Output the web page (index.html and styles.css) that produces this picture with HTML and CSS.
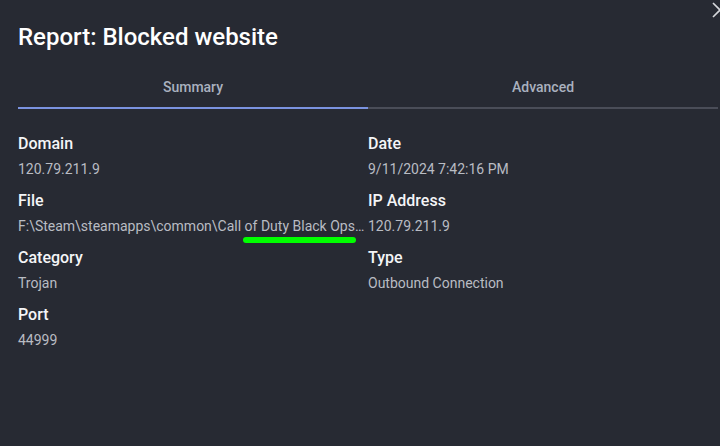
FILE: index.html
```html
<!DOCTYPE html>
<html>
<head>
<meta charset="utf-8">
<link rel="stylesheet" href="styles.css">
</head>
<body>
<div class="dialog">
  <svg class="close" width="16" height="16" viewBox="0 0 16 16"><path d="M1 1 L15 15 M15 1 L1 15" stroke="#d6d8dc" stroke-width="1.6" fill="none"/></svg>
  <h1 class="title">Report: Blocked website</h1>
  <div class="tabs">
    <div class="tab active">Summary</div>
    <div class="tab">Advanced</div>
  </div>
  <div class="grid">
    <div class="field"><div class="label">Domain</div><div class="value">120.79.211.9</div></div>
    <div class="field"><div class="label">Date</div><div class="value">9/11/2024 7:42:16 PM</div></div>
    <div class="field"><div class="label">File</div><div class="value trunc">F:\Steam\steamapps\common\Call of Duty Black Ops III\BlackOps3.exe</div></div>
    <div class="field"><div class="label">IP Address</div><div class="value">120.79.211.9</div></div>
    <div class="field"><div class="label">Category</div><div class="value">Trojan</div></div>
    <div class="field"><div class="label">Type</div><div class="value">Outbound Connection</div></div>
    <div class="field"><div class="label">Port</div><div class="value">44999</div></div>
  </div>
  <div class="highlight"></div>
</div>
</body>
</html>
```
FILE: styles.css
```css
* { box-sizing: border-box; }
html, body {
  margin: 0;
  padding: 0;
  width: 720px;
  height: 446px;
  overflow: hidden;
  background: #272a33;
  font-family: Roboto, "Liberation Sans", sans-serif;
}
.dialog {
  position: relative;
  width: 720px;
  height: 446px;
  padding: 21px 2px 0 18px;
}
.close {
  position: absolute;
  left: 712px;
  top: 2px;
}
.title {
  margin: 0;
  font-size: 24px;
  line-height: 32px;
  font-weight: 500;
  color: #ffffff;
}
.tabs {
  display: flex;
  margin-top: 24px;
}
.tab {
  flex: 0 0 350px;
  text-align: center;
  font-size: 14px;
  line-height: 20px;
  font-weight: 500;
  color: #aab1bf;
  padding-bottom: 10px;
  border-bottom: 2px solid #4a4d58;
}
.tab.active {
  border-bottom-color: #7b93e0;
}
.grid {
  display: grid;
  grid-template-columns: 350px 350px;
  row-gap: 12px;
  margin-top: 25px;
}
.field {
  display: flex;
  flex-direction: column;
  gap: 5px;
  min-width: 0;
}
.label {
  font-size: 16px;
  line-height: 20px;
  font-weight: 500;
  color: #f4f5f7;
}
.value {
  font-size: 14px;
  line-height: 20px;
  color: #b9bcc3;
}
.trunc {
  white-space: nowrap;
  overflow: hidden;
  text-overflow: ellipsis;
  width: 347px;
}
.highlight {
  position: absolute;
  left: 243px;
  top: 237px;
  width: 113px;
  height: 6px;
  border-radius: 3px;
  background: #00ff00;
}
```
